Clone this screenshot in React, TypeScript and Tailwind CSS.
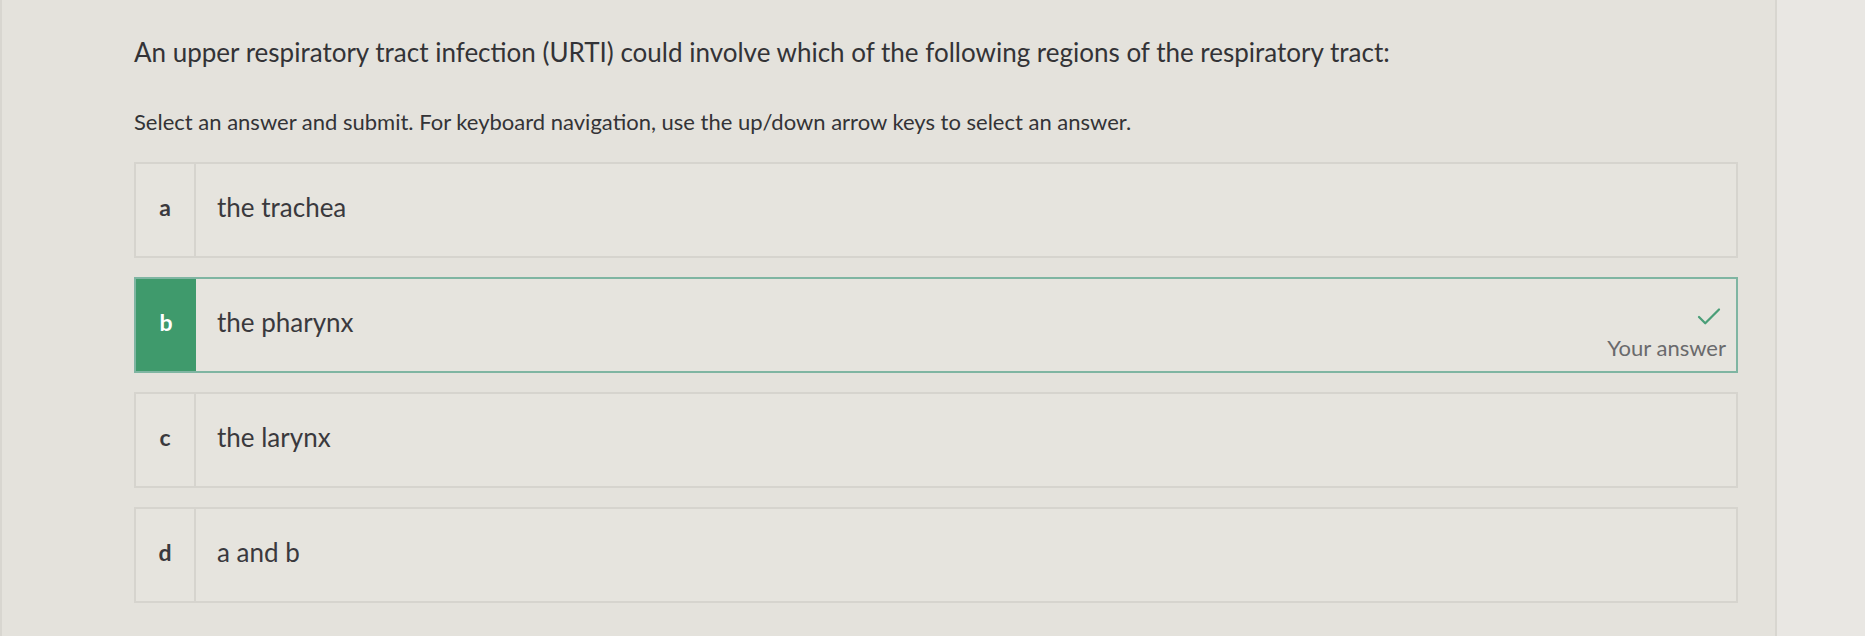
import { Check } from "lucide-react";

type Option = { key: string; label: string; selected?: boolean };

const options: Option[] = [
  { key: "a", label: "the trachea" },
  { key: "b", label: "the pharynx", selected: true },
  { key: "c", label: "the larynx" },
  { key: "d", label: "a and b" },
];

function OptionRow({ opt }: { opt: Option }) {
  if (opt.selected) {
    return (
      <div className="flex h-[96px] border-2 border-[#7fb5a2] bg-[#e6e4de]">
        <div className="flex w-[60px] shrink-0 items-center justify-center bg-[#3f9a6c] pb-[6px] text-[23px] font-bold text-white">
          {opt.key}
        </div>
        <div className="flex flex-1 items-center pb-[6px] pl-[21px] text-[26px] text-[#3a393d]">
          {opt.label}
        </div>
        <div className="flex flex-col items-end justify-center pr-[10px] pt-[14px]">
          <Check className="mr-[2px] h-[30px] w-[30px] text-[#4a9e78]" strokeWidth={1.8} />
          <span className="mt-[2px] text-[22px] leading-[28px] text-[#6a6a6c]">Your answer</span>
        </div>
      </div>
    );
  }
  return (
    <div className="flex h-[96px] border-2 border-[#d6d4ce] bg-[#e6e4de]">
      <div className="flex w-[60px] shrink-0 items-center justify-center border-r-2 border-[#d6d4ce] pb-[6px] text-[23px] font-bold text-[#3a393d]">
        {opt.key}
      </div>
      <div className="flex flex-1 items-center pb-[6px] pl-[21px] text-[26px] text-[#3a393d]">
        {opt.label}
      </div>
    </div>
  );
}

export default function App() {
  return (
    <div
      className="flex h-[636px] w-full overflow-hidden bg-[#e8e6e1]"
      style={{ fontFamily: "Lato, 'Open Sans', sans-serif" }}
    >
      <div className="h-full w-[1777px] shrink-0 border-l-2 border-r-2 border-[#d8d6d0] bg-[#e4e2dc] pl-[132px] pt-[34px]">
        <h1 className="text-[26px] leading-[36px] text-[#333336]">
          An upper respiratory tract infection (URTI) could involve which of the following regions of the respiratory tract:
        </h1>
        <p className="mt-[38px] text-[22px] leading-[28px] text-[#333336]">
          Select an answer and submit. For keyboard navigation, use the up/down arrow keys to select an answer.
        </p>
        <div className="mt-[26px] flex w-[1604px] flex-col gap-[19px]">
          {options.map((o) => (
            <OptionRow key={o.key} opt={o} />
          ))}
        </div>
      </div>
      <div className="flex-1 bg-[#e9e7e3]" />
    </div>
  );
}
